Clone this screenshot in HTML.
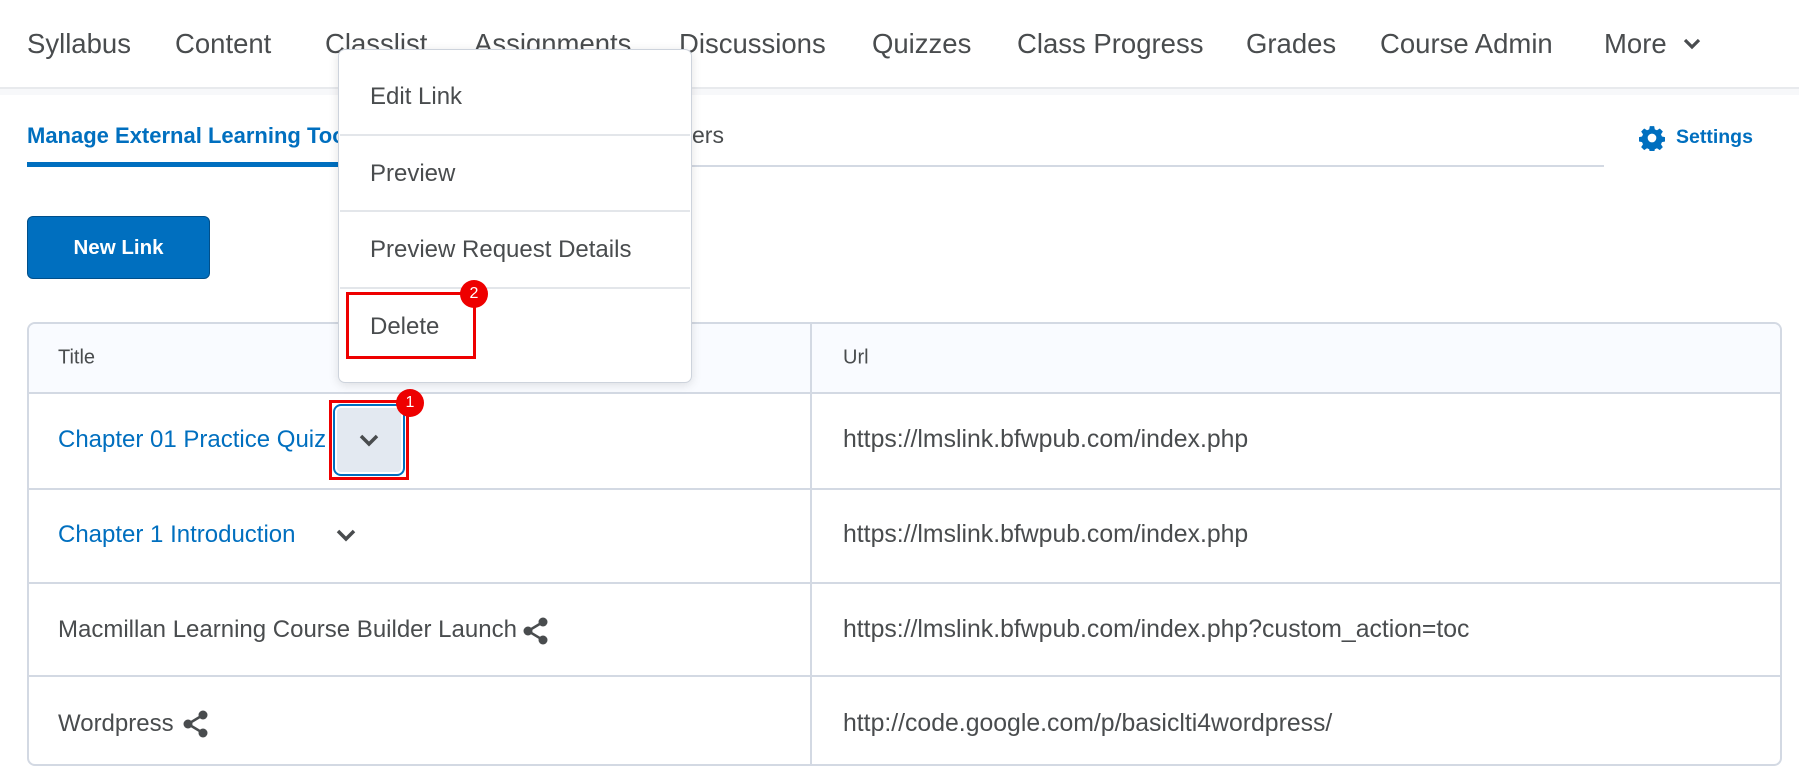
<!DOCTYPE html>
<html><head><meta charset="utf-8"><style>
*{margin:0;padding:0;box-sizing:border-box}
body{width:1799px;height:784px;background:#fff;font-family:"Liberation Sans",sans-serif;color:#494c4e;position:relative;overflow:hidden}
.a{position:absolute;white-space:nowrap}
.nav{font-size:27.5px;top:28px;color:#494c4e}
.row{font-size:24px;transform:translateY(-50%)}
.url{font-size:24.8px}
.blue{color:#006fbf}
.hl{position:absolute;height:2px;background:#d3d9e3}
.mi{position:absolute;left:370px;font-size:24px;color:#494c4e;transform:translateY(-50%)}
.sep{position:absolute;left:340px;width:350px;height:2px;background:#e3e6ea}
.badge{position:absolute;width:28px;height:28px;border-radius:50%;background:#e00;color:#fff;font-size:16px;text-align:center;line-height:28px}
</style></head><body>
<div class="a nav" style="left:27px">Syllabus</div>
<div class="a nav" style="left:175px">Content</div>
<div class="a nav" style="left:325px">Classlist</div>
<div class="a nav" style="left:474px">Assignments</div>
<div class="a nav" style="left:679px">Discussions</div>
<div class="a nav" style="left:872px">Quizzes</div>
<div class="a nav" style="left:1017px">Class Progress</div>
<div class="a nav" style="left:1246px">Grades</div>
<div class="a nav" style="left:1380px">Course Admin</div>
<div class="a nav" style="left:1604px">More</div>
<svg class="a" style="left:1682px;top:36px" width="20" height="16" viewBox="0 0 20 16"><path d="M3 4l7 7 7-7" fill="none" stroke="#494c4e" stroke-width="3.2"/></svg>
<div class="a" style="left:0;top:87px;width:1799px;height:2px;background:#e8eaed"></div>
<div class="a" style="left:0;top:89px;width:1799px;height:6px;background:#f7f8fa"></div>

<div class="a blue" style="left:27px;top:123px;font-size:22px;font-weight:bold">Manage External Learning Tools</div>
<div class="a" style="left:692px;top:122px;font-size:23px">ers</div>
<div class="a" style="left:27px;top:165px;width:1577px;height:2px;background:#d3d9e3"></div>
<div class="a" style="left:27px;top:162px;width:320px;height:5px;background:#006fbf"></div>
<svg class="a" style="left:1639px;top:125px" width="26" height="26" viewBox="0 0 24 24"><path fill="#006fbf" d="M10 1h4l.6 3 2 .9 2.6-1.7 2.8 2.8-1.7 2.6.9 2 3 .6v4l-3 .6-.9 2 1.7 2.6-2.8 2.8-2.6-1.7-2 .9-.6 3h-4l-.6-3-2-.9-2.6 1.7-2.8-2.8 1.7-2.6-.9-2-3-.6v-4l3-.6.9-2-1.7-2.6 2.8-2.8 2.6 1.7 2-.9zM12 8a4 4 0 100 8 4 4 0 000-8z"/></svg>
<div class="a blue" style="left:1676px;top:126px;font-size:19.5px;font-weight:bold">Settings</div>

<div class="a" style="left:27px;top:216px;width:183px;height:63px;background:#006fbf;border:1px solid #004f8a;border-radius:6px;color:#fff;font-weight:bold;font-size:20.5px;text-align:center;line-height:61px">New Link</div>

<div class="a" style="left:27px;top:322px;width:1755px;height:444px;border:2px solid #d3d9e3;border-radius:8px;overflow:hidden">
 <div style="position:absolute;left:0;top:0;width:100%;height:70px;background:#f9fbff"></div>
</div>
<div class="hl" style="left:29px;top:392px;width:1751px"></div>
<div class="hl" style="left:29px;top:488px;width:1751px"></div>
<div class="hl" style="left:29px;top:582px;width:1751px"></div>
<div class="hl" style="left:29px;top:675px;width:1751px"></div>
<div class="a" style="left:810px;top:324px;width:2px;height:440px;background:#d3d9e3"></div>

<div class="a row" style="left:58px;top:358px;font-size:20px">Title</div>
<div class="a row" style="left:843px;top:358px;font-size:20px">Url</div>
<div class="a row blue" style="left:58px;top:440px">Chapter 01 Practice Quiz</div>
<div class="a row blue" style="left:58px;top:535px">Chapter 1 Introduction</div>
<div class="a row" style="left:58px;top:630px">Macmillan Learning Course Builder Launch</div>
<div class="a row" style="left:58px;top:724px">Wordpress</div>
<div class="a row url" style="left:843px;top:440px">https://lmslink.bfwpub.com/index.php</div>
<div class="a row url" style="left:843px;top:535px">https://lmslink.bfwpub.com/index.php</div>
<div class="a row url" style="left:843px;top:630px">https://lmslink.bfwpub.com/index.php?custom_action=toc</div>
<div class="a row url" style="left:843px;top:724px">http://code.google.com/p/basiclti4wordpress/</div>

<div class="a" style="left:333px;top:404px;width:72px;height:72px;background:#e3e9f1;border:2px solid #006fbf;border-radius:8px;box-shadow:0 0 0 2px #fff inset"></div>
<svg class="a" style="left:357px;top:433px" width="24" height="16" viewBox="0 0 24 16"><path d="M4 3l8 8 8-8" fill="none" stroke="#494c4e" stroke-width="3.5"/></svg>
<div class="a" style="left:329px;top:400px;width:80px;height:80px;border:3px solid #e00"></div>
<div class="badge" style="left:396px;top:389px">1</div>
<svg class="a" style="left:334px;top:528px" width="24" height="16" viewBox="0 0 24 16"><path d="M4 3l8 8 8-8" fill="none" stroke="#494c4e" stroke-width="3.5"/></svg>

<svg class="a" style="left:522px;top:617px" width="28" height="28" viewBox="0 0 28 28"><g fill="#494c4e"><circle cx="21" cy="5" r="4.5"/><circle cx="6" cy="14" r="4.5"/><circle cx="21" cy="23" r="4.5"/></g><path d="M21 5L6 14l15 9" fill="none" stroke="#494c4e" stroke-width="2.5"/></svg>
<svg class="a" style="left:182px;top:710px" width="28" height="28" viewBox="0 0 28 28"><g fill="#494c4e"><circle cx="21" cy="5" r="4.5"/><circle cx="6" cy="14" r="4.5"/><circle cx="21" cy="23" r="4.5"/></g><path d="M21 5L6 14l15 9" fill="none" stroke="#494c4e" stroke-width="2.5"/></svg>

<div class="a" style="left:338px;top:49px;width:354px;height:334px;background:#fff;border:1px solid #cdd3dc;border-radius:7px;box-shadow:0 2px 10px rgba(0,0,0,.12)"></div>
<div class="mi" style="top:97px">Edit Link</div>
<div class="sep" style="top:134px"></div>
<div class="mi" style="top:174px">Preview</div>
<div class="sep" style="top:210px"></div>
<div class="mi" style="top:250px">Preview Request Details</div>
<div class="sep" style="top:287px"></div>
<div class="mi" style="top:327px">Delete</div>
<div class="a" style="left:346px;top:292px;width:130px;height:67px;border:3px solid #e00"></div>
<div class="badge" style="left:460px;top:280px">2</div>
</body></html>
